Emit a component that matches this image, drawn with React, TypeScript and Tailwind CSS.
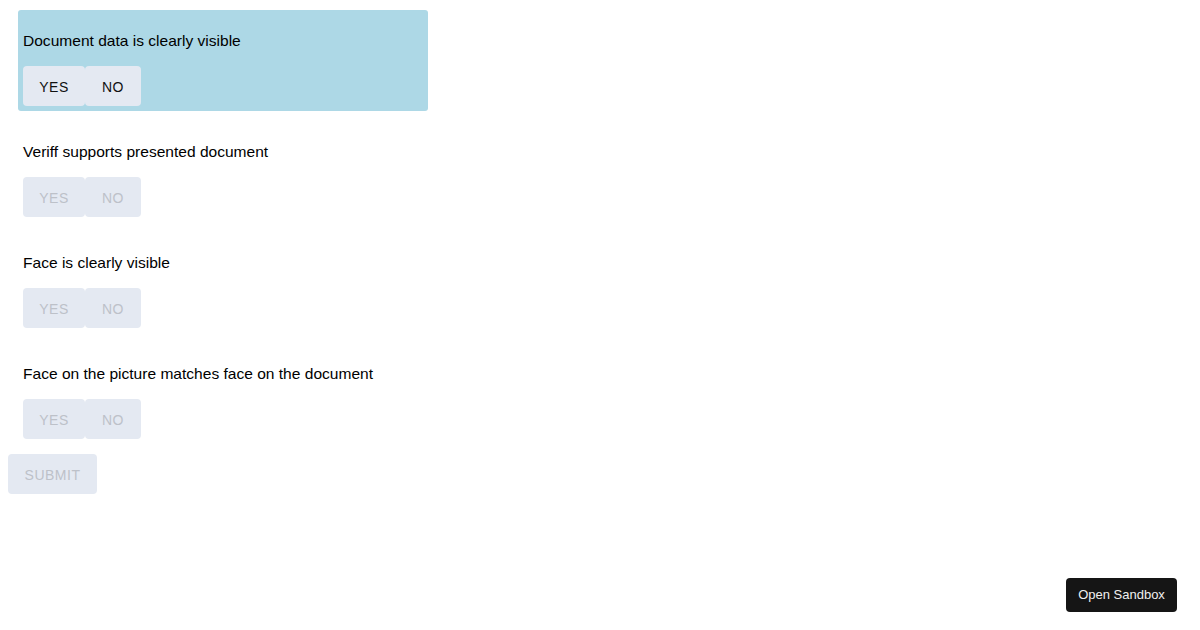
import { useState } from 'react';

type Answer = 'yes' | 'no' | null;

const checks = [
  'Document data is clearly visible',
  'Veriff supports presented document',
  'Face is clearly visible',
  'Face on the picture matches face on the document',
];

export default function App() {
  const [answers] = useState<Answer[]>([null, null, null, null]);
  const active = 0;

  return (
    <div className="min-h-[630px] bg-white p-2 text-black font-['Liberation_Sans',Arial,sans-serif]">
      <div className="flex flex-col gap-[10px]">
        {checks.map((label, i) => {
          const enabled = i === active;
          return (
            <div
              key={label}
              className={`mx-[10px] first:mt-[2px] w-[410px] rounded-[3px] p-[5px] ${enabled ? 'bg-[#add8e6]' : ''}`}
            >
              <p className="my-4 text-[15.55px] leading-[19px]">{label}</p>
              <div className="flex">
                <button
                  disabled={!enabled}
                  className={`h-10 w-[62px] rounded-[4px] bg-[#e4e9f2] pt-[2px] text-sm tracking-[0.5px] ${enabled ? 'text-[#111]' : 'text-[#bdc1c9]'}`}
                >
                  YES
                </button>
                <button
                  disabled={!enabled}
                  className={`h-10 w-[56px] rounded-[4px] bg-[#e4e9f2] pt-[2px] text-sm tracking-[0.5px] ${enabled ? 'text-[#111]' : 'text-[#bdc1c9]'}`}
                >
                  NO
                </button>
              </div>
              {answers[i] && <span className="hidden">{answers[i]}</span>}
            </div>
          );
        })}
      </div>
      <button
        disabled
        className="mt-[10px] h-10 w-[89px] rounded-[4px] bg-[#e4e9f2] pt-[2px] text-sm tracking-[0.5px] text-[#bdc1c9]"
      >
        SUBMIT
      </button>

      <button className="fixed bottom-[18px] right-[23px] h-[34px] w-[111px] rounded-[4px] bg-[#151515] text-[13px] text-[#f0f0f0]">
        Open Sandbox
      </button>
    </div>
  );
}
